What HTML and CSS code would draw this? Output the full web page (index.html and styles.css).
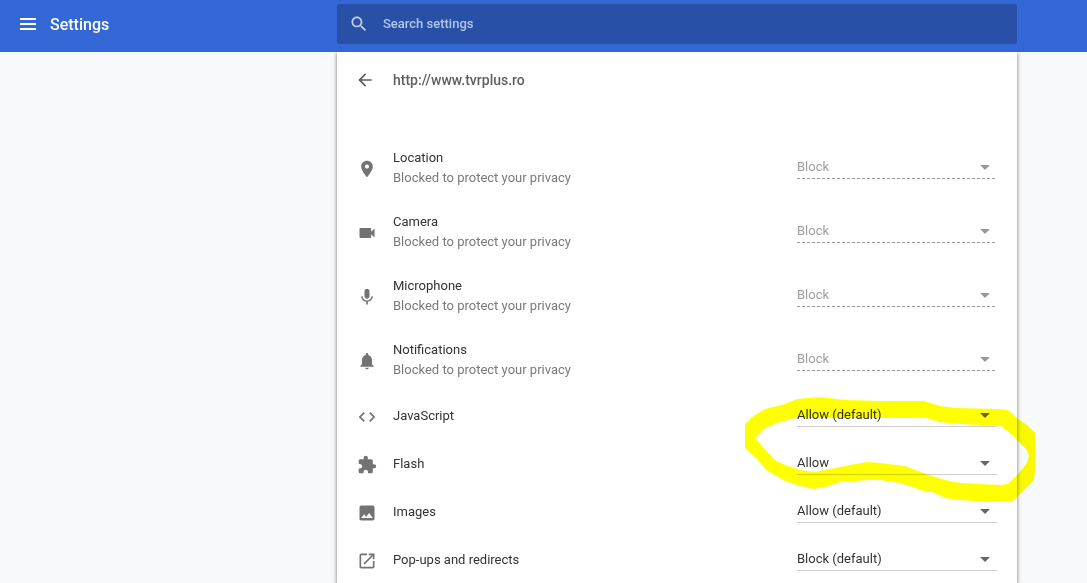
FILE: index.html
```
<!DOCTYPE html>
<html lang="en">

<head>
    <meta charset="UTF-8">
    <meta name="viewport" content="width=device-width, initial-scale=1.0">
    <title>Settings</title>
    <link rel="stylesheet" href="styles.css">
</head>

<body>

    <header class="toolbar">
        <div class="toolbar-left">
            <button type="button" class="icon-button" aria-label="Main menu">
                <svg class="icon" viewBox="0 0 24 24"><path d="M4 6h16v2H4zM4 11h16v2H4zM4 16h16v2H4z"/></svg>
            </button>
            <h1>Settings</h1>
        </div>
        <div class="search">
            <label for="search" aria-label="Search settings">
                <svg class="icon" viewBox="0 0 24 24"><path d="M15.5 14h-.79l-.28-.27C15.41 12.59 16 11.11 16 9.5 16 5.91 13.09 3 9.5 3S3 5.91 3 9.5 5.91 16 9.5 16c1.61 0 3.09-.59 4.23-1.57l.27.28v.79l5 4.99L20.49 19l-4.99-5zm-6 0C7.01 14 5 11.99 5 9.5S7.01 5 9.5 5 14 7.01 14 9.5 11.99 14 9.5 14z"/></svg>
            </label>
            <input type="search" id="search" placeholder="Search settings">
        </div>
    </header>

    <main class="page">
        <section class="card">
            <div class="card-header">
                <button type="button" class="icon-button" aria-label="Back">
                    <svg class="icon" viewBox="0 0 24 24"><path d="M20 11H7.83l5.59-5.59L12 4l-8 8 8 8 1.41-1.41L7.83 13H20v-2z"/></svg>
                </button>
                <h2>http://www.tvrplus.ro</h2>
            </div>

            <ul class="permissions">
                <li class="row row-tall">
                    <svg class="icon" viewBox="0 0 24 24"><path d="M12 2C8.13 2 5 5.13 5 9c0 5.25 7 13 7 13s7-7.75 7-13c0-3.87-3.13-7-7-7zm0 9.5c-1.38 0-2.5-1.12-2.5-2.5s1.12-2.5 2.5-2.5 2.5 1.12 2.5 2.5-1.12 2.5-2.5 2.5z"/></svg>
                    <div class="text">
                        <label for="location">Location</label>
                        <p>Blocked to protect your privacy</p>
                    </div>
                    <div class="select">
                        <select id="location" disabled><option>Block</option></select>
                    </div>
                </li>
                <li class="row row-tall">
                    <svg class="icon" viewBox="0 0 24 24"><path d="M17 10.5V7c0-.55-.45-1-1-1H4c-.55 0-1 .45-1 1v10c0 .55.45 1 1 1h12c.55 0 1-.45 1-1v-3.5l4 4v-11l-4 4z"/></svg>
                    <div class="text">
                        <label for="camera">Camera</label>
                        <p>Blocked to protect your privacy</p>
                    </div>
                    <div class="select">
                        <select id="camera" disabled><option>Block</option></select>
                    </div>
                </li>
                <li class="row row-tall">
                    <svg class="icon" viewBox="0 0 24 24"><path d="M12 14c1.66 0 2.99-1.34 2.99-3L15 5c0-1.66-1.34-3-3-3S9 3.34 9 5v6c0 1.66 1.34 3 3 3zm5.3-3c0 3-2.54 5.1-5.3 5.1S6.7 14 6.7 11H5c0 3.41 2.72 6.23 6 6.72V21h2v-3.28c3.28-.48 6-3.3 6-6.72h-1.7z"/></svg>
                    <div class="text">
                        <label for="microphone">Microphone</label>
                        <p>Blocked to protect your privacy</p>
                    </div>
                    <div class="select">
                        <select id="microphone" disabled><option>Block</option></select>
                    </div>
                </li>
                <li class="row row-tall">
                    <svg class="icon" viewBox="0 0 24 24"><path d="M12 22c1.1 0 2-.9 2-2h-4c0 1.1.89 2 2 2zm6-6v-5c0-3.07-1.64-5.64-4.5-6.32V4c0-.83-.67-1.5-1.5-1.5s-1.5.67-1.5 1.5v.68C7.63 5.36 6 7.92 6 11v5l-2 2v1h16v-1l-2-2z"/></svg>
                    <div class="text">
                        <label for="notifications">Notifications</label>
                        <p>Blocked to protect your privacy</p>
                    </div>
                    <div class="select">
                        <select id="notifications" disabled><option>Block</option></select>
                    </div>
                </li>
                <li class="row">
                    <svg class="icon" viewBox="0 0 24 24"><path d="M9.4 16.6L4.8 12l4.6-4.6L8 6l-6 6 6 6 1.4-1.4zm5.2 0l4.6-4.6-4.6-4.6L16 6l6 6-6 6-1.4-1.4z"/></svg>
                    <div class="text">
                        <label for="javascript">JavaScript</label>
                    </div>
                    <div class="select">
                        <select id="javascript"><option>Allow (default)</option><option>Allow</option><option>Block</option></select>
                    </div>
                </li>
                <li class="row">
                    <svg class="icon" viewBox="0 0 24 24"><path d="M20.5 11H19V7c0-1.1-.9-2-2-2h-4V3.5C13 2.12 11.88 1 10.5 1S8 2.12 8 3.5V5H4c-1.1 0-1.99.9-1.99 2v3.8H3.5c1.49 0 2.7 1.21 2.7 2.7s-1.21 2.7-2.7 2.7H2V20c0 1.1.9 2 2 2h3.8v-1.5c0-1.49 1.21-2.7 2.7-2.7 1.49 0 2.7 1.21 2.7 2.7V22H17c1.1 0 2-.9 2-2v-4h1.5c1.38 0 2.5-1.12 2.5-2.5S21.88 11 20.5 11z"/></svg>
                    <div class="text">
                        <label for="flash">Flash</label>
                    </div>
                    <div class="select">
                        <select id="flash"><option>Allow</option><option>Block</option></select>
                    </div>
                </li>
                <li class="row">
                    <svg class="icon" viewBox="0 0 24 24"><path d="M21 19V5c0-1.1-.9-2-2-2H5c-1.1 0-2 .9-2 2v14c0 1.1.9 2 2 2h14c1.1 0 2-.9 2-2zM8.5 13.5l2.5 3.01L14.5 12l4.5 6H5l3.5-4.5z"/></svg>
                    <div class="text">
                        <label for="images">Images</label>
                    </div>
                    <div class="select">
                        <select id="images"><option>Allow (default)</option><option>Allow</option><option>Block</option></select>
                    </div>
                </li>
                <li class="row">
                    <svg class="icon" viewBox="0 0 24 24"><path d="M19 19H5V5h7V3H5c-1.11 0-2 .9-2 2v14c0 1.1.89 2 2 2h14c1.1 0 2-.9 2-2v-7h-2v7zM14 3v2h3.59l-9.83 9.83 1.41 1.41L19 6.41V10h2V3h-7z"/></svg>
                    <div class="text">
                        <label for="popups">Pop-ups and redirects</label>
                    </div>
                    <div class="select">
                        <select id="popups"><option>Block (default)</option><option>Allow</option><option>Block</option></select>
                    </div>
                </li>
            </ul>

            <!-- highlighter around the JavaScript and Flash menus -->
            <svg class="marker" viewBox="745 397 290 105" aria-hidden="true">
                <path fill-rule="evenodd" d="M745 424L752 417 765 409 785 404 797 399 820 397 845 400 880 401 924 401 940 406 955 408 998 409 1008 410 1018 419 1027 425 1035 433V470L1034 480 1013 501 990 502 960 500 945 498 932 492 926 492 915 488 900 483 880 480 868 480 855 481 840 482 825 487 813 489 800 486 785 481 766 470 758 460 745 448ZM755 438L762 446 775 460 785 465 800 470 815 472 825 470 840 467 850 465 867 462 880 463 905 466 926 474 945 480 960 483 1000 485 1008 484 1018 474 1027 463 1029 456 1027 450 1012 435 1001 426 960 424 940 422 926 418 813 418 795 418 774 424 764 429Z"/>
            </svg>
        </section>
    </main>

</body>

</html>
```

FILE: styles.css
```
* {
    box-sizing: border-box;
}

body {
    margin: 0;
    display: flex;
    flex-direction: column;
    min-height: 100vh;
    font-family: Roboto, "Liberation Sans", sans-serif;
    font-size: 13px;
    line-height: 20px;
    background-color: #f8f9fb;
    color: #333;
}

h1,
h2,
p {
    margin: 0;
    font-weight: 400;
}

.icon {
    display: block;
    width: 20px;
    height: 20px;
    fill: currentColor;
}

.icon-button {
    padding: 0;
    border: 0;
    background: none;
    color: inherit;
}

.toolbar,
.page {
    display: grid;
    grid-template-columns: 337px minmax(0, 680px) 1fr;
}

.toolbar {
    position: sticky;
    top: 0;
    z-index: 1;
    flex: none;
    height: 52px;
    padding: 4px 0 8px;
    background-color: #3367d6;
    color: #fff;
}

.toolbar-left {
    display: flex;
    align-items: center;
    gap: 10px;
    padding-left: 16px;
}

.toolbar .toolbar-left .icon {
    width: 24px;
    height: 24px;
}

.toolbar h1 {
    padding-top: 2px;
    font-size: 16px;
    font-weight: 500;
}

.search {
    display: flex;
    align-items: center;
    gap: 14px;
    padding: 0 12px;
    border-radius: 2px;
    background-color: #2850a7;
    color: #c3d1ef;
}

.search input {
    flex: 1;
    padding: 0;
    border: 0;
    outline: 0;
    background: none;
    font: 500 13px/20px Roboto, "Liberation Sans", sans-serif;
    color: #fff;
}

.search input::placeholder {
    color: #b4c6ee;
    opacity: 1;
}

.page {
    flex: 1;
}

.card {
    position: relative;
    grid-column: 2;
    background-color: #fff;
    box-shadow: 0 1px 4px rgba(0, 0, 0, 0.55);
}

.card-header {
    display: flex;
    align-items: center;
    gap: 18px;
    height: 56px;
    margin-bottom: 28px;
    padding: 0 18px;
    color: #5f5f5f;
}

.card-header h2 {
    font-size: 14px;
    font-weight: 500;
}

.permissions {
    margin: 0;
    padding: 0;
    list-style: none;
}

.row {
    display: flex;
    align-items: center;
    gap: 16px;
    height: 48px;
    padding: 0 20px;
}

.row-tall {
    height: 64px;
}

.row .icon {
    margin-top: 2px;
    color: #737373;
}

.text {
    flex: 1;
}

.text label {
    display: block;
}

.text p {
    color: #7a7a7a;
}

.select {
    position: relative;
    width: 200px;
}

.select::after {
    content: "";
    position: absolute;
    top: 8px;
    right: 7px;
    border: 5px solid transparent;
    border-top-color: #666;
    border-bottom: 0;
    pointer-events: none;
}

.select select {
    display: block;
    appearance: none;
    width: 100%;
    height: 22px;
    padding: 0 20px 2px 0;
    border: 0;
    border-bottom: 1px solid #d2d2d2;
    border-radius: 0;
    background: none;
    font: inherit;
    color: #333;
}

.select select:disabled {
    border-bottom: 0;
    background: repeating-linear-gradient(to right, #999 0 3px, transparent 3px 5px) bottom / 100% 1px no-repeat;
    color: #a0a0a0;
    opacity: 1;
}

.select:has(select:disabled)::after {
    border-top-color: #999;
}

.marker {
    position: absolute;
    top: 345px;
    left: 408px;
    width: 290px;
    height: 105px;
    fill: #ff0;
    mix-blend-mode: multiply;
    pointer-events: none;
}
```
